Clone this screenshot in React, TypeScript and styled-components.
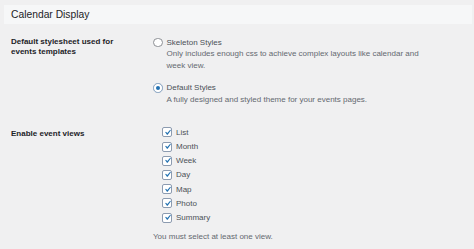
import React from "react";
import styled, { createGlobalStyle } from "styled-components";

const GlobalStyle = createGlobalStyle`
  html, body {
    margin: 0;
    padding: 0;
    background: #f0f0f1;
  }
  body {
    font-family: "Liberation Sans", Arial, sans-serif;
    -webkit-font-smoothing: antialiased;
  }
`;

const Page = styled.div`
  padding: 5px 2px 0 4px;
  width: 474px;
  height: 249px;
  box-sizing: border-box;
  overflow: hidden;
`;

const Header = styled.div`
  height: 19px;
  display: flex;
  align-items: center;
  padding-left: 7px;
  background: #f6f7f8;
  color: #1d2327;
  font-size: 10.3px;
  font-weight: 400;
`;

const Row = styled.div<{ $top: number }>`
  display: grid;
  grid-template-columns: 149px 1fr;
  align-items: start;
  margin-top: ${(p) => p.$top}px;
`;

const Label = styled.div<{ $pad: number }>`
  padding-left: 7px;
  padding-top: ${(p) => p.$pad}px;
  font-size: 8px;
  line-height: 10.5px;
  font-weight: 700;
  color: #1d2327;
`;

const Cell = styled.div<{ $pad?: number }>`
  display: flex;
  flex-direction: column;
  padding-top: ${(p) => p.$pad ?? 0}px;
`;

const Option = styled.div<{ $gap?: number }>`
  display: flex;
  flex-direction: column;
  margin-bottom: ${(p) => p.$gap ?? 0}px;
`;

const OptionLine = styled.label`
  display: flex;
  align-items: center;
  gap: 4px;
  font-size: 8px;
  line-height: 11.5px;
  color: #4b5157;
`;

const Radio = styled.span<{ $checked?: boolean }>`
  width: 9.5px;
  height: 9.5px;
  box-sizing: border-box;
  border-radius: 50%;
  border: 1px solid ${(p) => (p.$checked ? "#7f9cbc" : "#8c8f94")};
  background: #fff;
  display: flex;
  align-items: center;
  justify-content: center;
  flex: none;
  &::before {
    content: "";
    display: ${(p) => (p.$checked ? "block" : "none")};
    width: 4.5px;
    height: 4.5px;
    border-radius: 50%;
    background: #2271b1;
  }
`;

const Description = styled.p<{ $indent?: number }>`
  margin: 0;
  padding-left: ${(p) => p.$indent ?? 0}px;
  max-width: 262px;
  font-size: 8px;
  line-height: 11.7px;
  color: #646970;
`;

const CheckList = styled.div`
  display: flex;
  flex-direction: column;
  padding-left: 9px;
`;

const CheckLine = styled.label`
  display: flex;
  align-items: center;
  gap: 4px;
  height: 14.2px;
  font-size: 8px;
  color: #4b5157;
`;

const Box = styled.span`
  width: 10px;
  height: 10px;
  box-sizing: border-box;
  border: 1px solid #8c9bb0;
  border-radius: 2px;
  background: #fff;
  display: flex;
  align-items: center;
  justify-content: center;
  flex: none;
  svg {
    width: 11px;
    height: 11px;
    flex: none;
    display: block;
  }
`;

const Note = styled.p`
  margin: 6px 0 0;
  font-size: 8px;
  line-height: 11.7px;
  color: #646970;
`;

const Check = () => (
  <svg viewBox="0 0 20 20">
    <path d="M14.83 4.89l1.34.94-5.81 8.38H9.02L5.78 9.67l1.34-1.25 2.57 2.4z" fill="#2271b1" />
  </svg>
);

const views = ["List", "Month", "Week", "Day", "Map", "Photo", "Summary"];

export default function App() {
  return (
    <>
      <GlobalStyle />
      <Page>
        <Header>Calendar Display</Header>
        <Row $top={0}>
          <Label $pad={12.5}>
            Default stylesheet used for
            <br />
            events templates
          </Label>
          <Cell $pad={12.5}>
            <Option $gap={10.7}>
              <OptionLine>
                <Radio />
                Skeleton Styles
              </OptionLine>
              <Description $indent={13.5}>
                Only includes enough css to achieve complex layouts like calendar and week view.
              </Description>
            </Option>
            <Option>
              <OptionLine>
                <Radio $checked />
                Default Styles
              </OptionLine>
              <Description $indent={13.5}>
                A fully designed and styled theme for your events pages.
              </Description>
            </Option>
          </Cell>
        </Row>
        <Row $top={20}>
          <Label $pad={3.6}>Enable event views</Label>
          <Cell>
            <CheckList>
              {views.map((v) => (
                <CheckLine key={v}>
                  <Box>
                    <Check />
                  </Box>
                  {v}
                </CheckLine>
              ))}
            </CheckList>
            <Note>You must select at least one view.</Note>
          </Cell>
        </Row>
      </Page>
    </>
  );
}
